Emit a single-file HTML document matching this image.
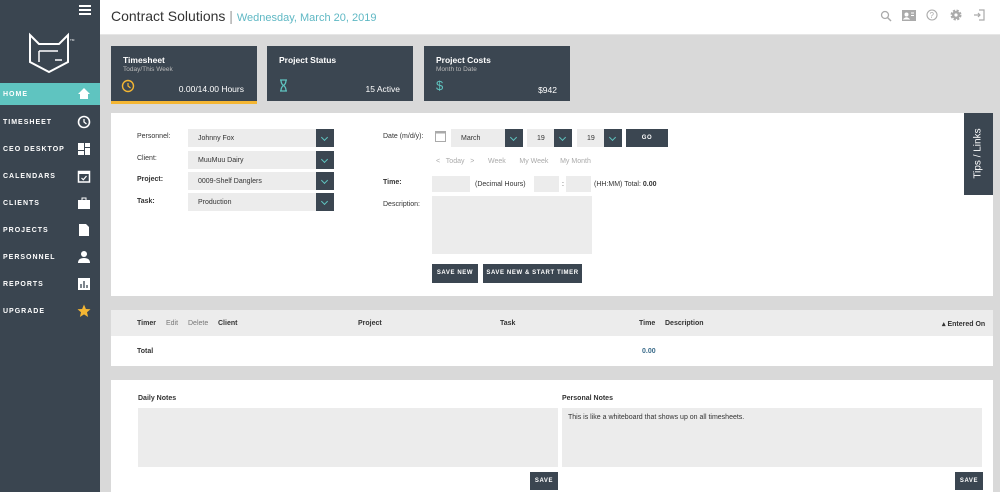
<!DOCTYPE html>
<html><head><meta charset="utf-8"><style>
*{box-sizing:border-box;margin:0;padding:0}
body{width:1000px;height:492px;overflow:hidden;font-family:"Liberation Sans",sans-serif;background:#d9d9d9;position:relative;font-size:8px;color:#333}
.a{position:absolute}
#side{left:0;top:0;width:100px;height:492px;background:#3a4550}
.nav{position:absolute;left:0;width:100px;height:22px;color:#fff;font-size:7px;font-weight:bold;letter-spacing:1px;padding-left:3px;line-height:24px}
.nav svg{position:absolute;right:9px;top:4px}
#head{left:100px;top:0;width:900px;height:35px;background:#fff;border-bottom:1px solid #e6e6e6}
.card{position:absolute;top:46px;height:55px;background:#3b4651;color:#fff}
.card b{position:absolute;left:12px;top:9px;font-size:8.5px}
.card i{position:absolute;left:12px;top:20px;font-size:6.5px;font-style:normal;color:#bbb}
.card span{position:absolute;right:13px;top:38px;font-size:8.5px}
.panel{position:absolute;background:#fff}
.lbl{position:absolute;font-size:7px;color:#333}
.sel{position:absolute;height:18px;background:#ececec;font-size:7px;line-height:19px;padding-left:10px}
.dd{position:absolute;width:18px;height:18px;background:#3b4651}
.dd:after{content:"";position:absolute;left:6px;top:6px;width:4px;height:4px;border-right:1px solid #5fc4c0;border-bottom:1px solid #5fc4c0;transform:rotate(45deg)}
.btn{position:absolute;background:#3b4651;color:#fff;font-size:6px;font-weight:bold;letter-spacing:.6px;text-align:center}
.inp{position:absolute;background:#ececec}
.th{position:absolute;top:320px;font-size:7px;font-weight:bold;color:#333}
</style></head><body>
<div id="side" class="a">
<div class="a" style="left:79px;top:5px;width:12px;height:2px;background:#fff;box-shadow:0 4px 0 #fff,0 8px 0 #fff"></div>
<svg class="a" style="left:27px;top:32px" width="48" height="42" viewBox="0 0 48 42"><path d="M3 3 L12 12 L32 12 L41 3 L41 30 L22 40 L3 30 Z" fill="none" stroke="#fff" stroke-width="2"/><path d="M12 19 L31 19 M12 19 L12 30 M28 28 L35 28" stroke="#fff" stroke-width="1.5" fill="none"/><text x="43" y="9" fill="#fff" font-size="3">TM</text></svg>
<div class="nav" style="top:83px;background:#5fc4c0">HOME<svg width="14" height="13" viewBox="0 0 14 13"><path d="M7 1 L13 7 L11 7 L11 12 L3 12 L3 7 L1 7Z" fill="#fff"/></svg></div>
<div class="nav" style="top:111px">TIMESHEET<svg width="14" height="14"><circle cx="7" cy="7" r="5.5" fill="none" stroke="#fff" stroke-width="1.6"/><path d="M7 4 V7 L9.5 9" stroke="#fff" stroke-width="1.3" fill="none"/></svg></div>
<div class="nav" style="top:138px">CEO DESKTOP<svg width="14" height="14"><path d="M1 1h6v7H1zM8 1h5v4H8zM8 6h5v7H8zM1 9h6v4H1z" fill="#fff"/></svg></div>
<div class="nav" style="top:165px">CALENDARS<svg width="14" height="14"><rect x="1.5" y="2.5" width="11" height="10.5" fill="none" stroke="#fff" stroke-width="1.5"/><rect x="1.5" y="2.5" width="11" height="2.5" fill="#fff"/><path d="M4.5 9 L6.3 10.8 L9.5 7" stroke="#fff" fill="none" stroke-width="1.2"/></svg></div>
<div class="nav" style="top:192px">CLIENTS<svg width="14" height="14"><rect x="1" y="4" width="12" height="9" fill="#fff"/><rect x="5" y="2" width="4" height="3" fill="none" stroke="#fff"/></svg></div>
<div class="nav" style="top:219px">PROJECTS<svg width="14" height="14"><path d="M2 1h7l3 3v9H2z" fill="#fff"/></svg></div>
<div class="nav" style="top:246px">PERSONNEL<svg width="14" height="14"><circle cx="7" cy="4" r="3" fill="#fff"/><path d="M1 13 Q1 8 7 8 Q13 8 13 13Z" fill="#fff"/></svg></div>
<div class="nav" style="top:273px">REPORTS<svg width="14" height="14"><rect x="1" y="1" width="12" height="12" fill="#fff"/><path d="M4 11V7M7 11V4M10 11V8" stroke="#3a4550" stroke-width="1.3"/></svg></div>
<div class="nav" style="top:300px">UPGRADE<svg width="14" height="14" viewBox="0 0 14 14"><path d="M7 .5 L8.9 5 L13.5 5.3 L10 8.3 L11.1 13 L7 10.4 L2.9 13 L4 8.3 L.5 5.3 L5.1 5Z" fill="#f4b633"/></svg></div>
</div>
<div id="head" class="a">
<div class="a" style="left:11px;top:8px;font-size:14px;color:#333">Contract Solutions <span style="color:#999">|</span> <span style="font-size:11px;color:#5fb8c4">Wednesday, March 20, 2019</span></div>
<svg class="a" style="left:780px;top:10px" width="12" height="12"><circle cx="5" cy="5" r="3.5" fill="none" stroke="#aaa" stroke-width="1.3"/><path d="M7.5 7.5L11 11" stroke="#aaa" stroke-width="1.5"/></svg>
<svg class="a" style="left:802px;top:10px" width="14" height="11"><rect width="14" height="11" fill="#aaa"/><circle cx="4.5" cy="4.5" r="2" fill="#fff"/><path d="M1.5 9.5Q4.5 6 7.5 9.5M9 3h3M9 5.5h3" stroke="#fff" fill="#fff"/></svg>
<svg class="a" style="left:826px;top:9px" width="12" height="12"><circle cx="6" cy="6" r="5" fill="none" stroke="#aaa" stroke-width="1.1"/><text x="3.5" y="9" font-size="8" fill="#aaa">?</text></svg>
<svg class="a" style="left:850px;top:9px" width="12" height="12"><circle cx="6" cy="6" r="4" fill="#aaa" stroke="#aaa" stroke-width="3" stroke-dasharray="2 1.2"/><circle cx="6" cy="6" r="1.6" fill="#fff"/></svg>
<svg class="a" style="left:873px;top:9px" width="12" height="12"><path d="M6 1h5v10H6" fill="none" stroke="#aaa" stroke-width="1.2"/><path d="M1 6h6M5 4l2 2-2 2" stroke="#aaa" fill="none" stroke-width="1.2"/></svg>
</div>
<div class="card" style="left:111px;width:146px"><b>Timesheet</b><i>Today/This Week</i>
<svg class="a" style="left:10px;top:33px" width="14" height="14"><circle cx="7" cy="7" r="5.5" fill="none" stroke="#f4b633" stroke-width="1.4"/><path d="M7 4V7L9.5 9" stroke="#f4b633" fill="none" stroke-width="1.2"/></svg>
<span>0.00/14.00 Hours</span><div class="a" style="left:0;top:55px;width:146px;height:3px;background:#f4b633"></div></div>
<div class="card" style="left:267px;width:146px"><b>Project Status</b>
<svg class="a" style="left:12px;top:33px" width="9" height="13"><path d="M1 1h7M1 12h7M2 1Q2 5 4.5 6.5Q7 8 7 12M7 1Q7 5 4.5 6.5Q2 8 2 12" stroke="#5fc4c0" fill="none" stroke-width="1.3"/></svg>
<span>15 Active</span></div>
<div class="card" style="left:424px;width:146px"><b>Project Costs</b><i>Month to Date</i>
<div class="a" style="left:12px;top:32px;font-size:13px;color:#5fc4c0">$</div><span style="top:39px">$942</span></div>

<div class="panel" style="left:111px;top:113px;width:882px;height:183px"></div>
<div class="lbl" style="left:137px;top:133px">Personnel:</div><div class="sel" style="left:188px;top:129px;width:128px">Johnny Fox</div><div class="dd" style="left:316px;top:129px"></div>
<div class="lbl" style="left:137px;top:155px">Client:</div><div class="sel" style="left:188px;top:151px;width:128px">MuuMuu Dairy</div><div class="dd" style="left:316px;top:151px"></div>
<div class="lbl" style="left:137px;top:176px;font-weight:bold">Project:</div><div class="sel" style="left:188px;top:172px;width:128px">0009-Shelf Danglers</div><div class="dd" style="left:316px;top:172px"></div>
<div class="lbl" style="left:137px;top:198px;font-weight:bold">Task:</div><div class="sel" style="left:188px;top:193px;width:128px">Production</div><div class="dd" style="left:316px;top:193px"></div>

<div class="lbl" style="left:383px;top:133px">Date (m/d/y):</div>
<svg class="a" style="left:435px;top:130px" width="11" height="12"><rect x=".5" y="1.5" width="10" height="10" fill="none" stroke="#aaa"/><rect x=".5" y="1.5" width="10" height="2" fill="#aaa"/></svg>
<div class="sel" style="left:451px;top:129px;width:54px">March</div><div class="dd" style="left:505px;top:129px"></div>
<div class="sel" style="left:527px;top:129px;width:27px">19</div><div class="dd" style="left:554px;top:129px"></div>
<div class="sel" style="left:577px;top:129px;width:27px">19</div><div class="dd" style="left:604px;top:129px"></div>
<div class="btn" style="left:626px;top:129px;width:42px;height:18px;line-height:18px">GO</div>
<div class="lbl" style="left:436px;top:158px;color:#aaa">&lt;&nbsp;&nbsp; Today &nbsp;&nbsp;&gt;&nbsp;&nbsp;&nbsp;&nbsp;&nbsp;&nbsp; Week &nbsp;&nbsp;&nbsp;&nbsp;&nbsp; My Week &nbsp;&nbsp;&nbsp;&nbsp; My Month</div>
<div class="lbl" style="left:383px;top:179px;font-weight:bold">Time:</div>
<div class="inp" style="left:432px;top:176px;width:38px;height:16px"></div>
<div class="lbl" style="left:475px;top:181px">(Decimal Hours)</div>
<div class="inp" style="left:534px;top:176px;width:25px;height:16px"></div>
<div class="lbl" style="left:562px;top:181px">:</div>
<div class="inp" style="left:566px;top:176px;width:25px;height:16px"></div>
<div class="lbl" style="left:594px;top:181px">(HH:MM) Total: <b>0.00</b></div>
<div class="lbl" style="left:383px;top:201px">Description:</div>
<div class="inp" style="left:432px;top:196px;width:160px;height:58px"></div>
<div class="btn" style="left:432px;top:264px;width:46px;height:19px;line-height:19px">SAVE NEW</div>
<div class="btn" style="left:483px;top:264px;width:99px;height:19px;line-height:19px">SAVE NEW &amp; START TIMER</div>
<div class="btn" style="left:964px;top:113px;width:29px;height:82px;font-size:10px;font-weight:normal;letter-spacing:0"><div style="position:absolute;left:-27px;top:35px;width:82px;transform:rotate(-90deg)">Tips / Links</div></div>

<div class="panel" style="left:111px;top:310px;width:882px;height:56px"></div>
<div class="a" style="left:111px;top:310px;width:882px;height:26px;background:#ececec"></div>
<div class="th" style="left:137px">Timer</div><div class="th" style="left:166px;font-weight:normal;color:#777">Edit</div><div class="th" style="left:188px;font-weight:normal;color:#777">Delete</div><div class="th" style="left:218px">Client</div><div class="th" style="left:358px">Project</div><div class="th" style="left:500px">Task</div><div class="th" style="left:639px">Time</div><div class="th" style="left:665px">Description</div><div class="th" style="left:942px">▴ Entered On</div>
<div class="th" style="left:137px;top:348px">Total</div><div class="th" style="left:642px;top:348px;color:#3a6b8a">0.00</div>

<div class="panel" style="left:111px;top:380px;width:882px;height:112px"></div>
<div class="th" style="left:138px;top:395px">Daily Notes</div>
<div class="th" style="left:562px;top:395px">Personal Notes</div>
<div class="inp" style="left:138px;top:408px;width:420px;height:59px"></div>
<div class="inp" style="left:562px;top:408px;width:420px;height:59px"><div style="font-size:7px;padding:6px 6px">This is like a whiteboard that shows up on all timesheets.</div></div>
<div class="btn" style="left:530px;top:472px;width:28px;height:18px;line-height:18px">SAVE</div>
<div class="btn" style="left:955px;top:472px;width:28px;height:18px;line-height:18px">SAVE</div>
</body></html>
